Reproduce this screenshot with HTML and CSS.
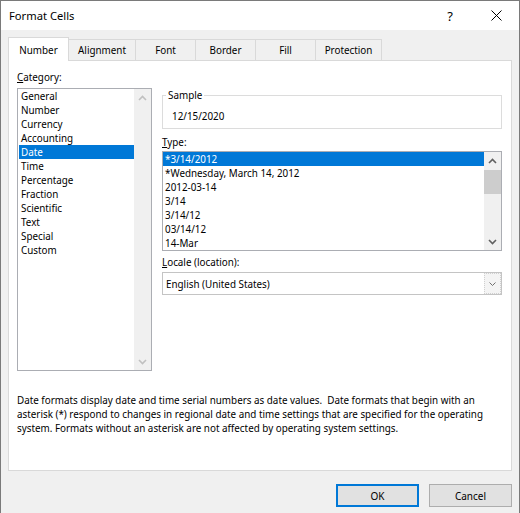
FILE: index.html
```
<!DOCTYPE html>
<html>
	<head>
		<meta charset="utf-8">
		<title>Format Cells</title>
		<link rel="stylesheet" href="styles.css">
	</head>
	<body>
		<div class="window">
			<div class="titlebar">
				<span class="title">Format Cells</span>
				<span class="caption-btn help">?</span>
				<span class="caption-btn close">
					<svg width="11" height="11" viewBox="0 0 11 11"><path d="M0.5 0.5 L10.5 10.5 M10.5 0.5 L0.5 10.5" stroke="#000" stroke-width="1" fill="none"/></svg>
				</span>
			</div>

			<div class="client">
				<div class="tabs">
					<div class="tab active tab-number">Number</div>
					<div class="tab tab-alignment">Alignment</div>
					<div class="tab tab-font">Font</div>
					<div class="tab tab-border">Border</div>
					<div class="tab tab-fill">Fill</div>
					<div class="tab tab-protection">Protection</div>
				</div>

				<div class="panel">
					<div class="label category-label"><u>C</u>ategory:</div>

					<div class="columns">
						<div class="listbox category">
							<div class="items">
								<div class="item">General</div>
								<div class="item">Number</div>
								<div class="item">Currency</div>
								<div class="item">Accounting</div>
								<div class="item selected">Date</div>
								<div class="item">Time</div>
								<div class="item">Percentage</div>
								<div class="item">Fraction</div>
								<div class="item">Scientific</div>
								<div class="item">Text</div>
								<div class="item">Special</div>
								<div class="item">Custom</div>
							</div>
							<div class="scrollbar disabled">
								<div class="arrow"><svg width="9" height="6" viewBox="0 0 9 6"><path d="M1 5 L4.5 1.5 L8 5" /></svg></div>
								<div class="track"></div>
								<div class="arrow"><svg width="9" height="6" viewBox="0 0 9 6"><path d="M1 1 L4.5 4.5 L8 1" /></svg></div>
							</div>
						</div>

						<div class="right">
							<fieldset class="sample">
								<legend>Sample</legend>
								<div class="sample-value">12/15/2020</div>
							</fieldset>

							<div class="label type-label"><u>T</u>ype:</div>
							<div class="listbox type">
								<div class="items">
									<div class="item selected">*3/14/2012</div>
									<div class="item">*Wednesday, March 14, 2012</div>
									<div class="item">2012-03-14</div>
									<div class="item">3/14</div>
									<div class="item">3/14/12</div>
									<div class="item">03/14/12</div>
									<div class="item">14-Mar</div>
								</div>
								<div class="scrollbar">
									<div class="arrow"><svg width="9" height="6" viewBox="0 0 9 6"><path d="M1 5 L4.5 1.5 L8 5" /></svg></div>
									<div class="track"><div class="thumb"></div></div>
									<div class="arrow"><svg width="9" height="6" viewBox="0 0 9 6"><path d="M1 1 L4.5 4.5 L8 1" /></svg></div>
								</div>
							</div>

							<div class="label locale-label"><u>L</u>ocale (location):</div>
							<div class="combo">
								<span class="combo-text">English (United States)</span>
								<span class="combo-btn"><svg width="9" height="6" viewBox="0 0 9 6"><path d="M1.5 1.5 L4.5 4.5 L7.5 1.5" /></svg></span>
							</div>
						</div>
					</div>

					<p class="description">
						Date formats display date and time serial numbers as date values.&nbsp; Date formats that begin with an<br>
						asterisk (*) respond to changes in regional date and time settings that are specified for the operating<br>
						system. Formats without an asterisk are not affected by operating system settings.
					</p>
				</div>

				<div class="buttons">
					<button class="default">OK</button>
					<button>Cancel</button>
				</div>
			</div>
		</div>
	</body>
</html>
```

FILE: styles.css
```
body {
	margin: 0;
	font-family: "Noto Sans", "Open Sans", sans-serif;
	font-size: 9.85px;
	color: #000;
	background: #f0f0f0;
}

.window {
	width: 520px;
	height: 513px;
	box-sizing: border-box;
	border: 1px solid #7a7a7a;
	border-bottom: none;
	display: flex;
	flex-direction: column;
	background: #f0f0f0;
}

.titlebar {
	height: 29px;
	background: #fff;
	display: flex;
	align-items: center;
}

.title {
	padding-left: 8px;
	font-size: 11.2px;
	flex: 1;
}

.caption-btn {
	width: 46px;
	height: 29px;
	display: flex;
	align-items: center;
	justify-content: center;
	font-size: 13px;
}

.client {
	flex: 1;
	padding: 7px 7px 0 7px;
}

/* tabs */

.tabs {
	height: 23px;
	display: flex;
	align-items: flex-end;
}

.tab {
	height: 21px;
	box-sizing: border-box;
	border: 1px solid #d9d9d9;
	border-bottom: none;
	margin-right: -1px;
	background: #f0f0f0;
	display: flex;
	align-items: center;
	justify-content: center;
}

.tab.active {
	height: 24px;
	margin-bottom: -1px;
	background: #fff;
	position: relative;
	z-index: 1;
}

.tab-number { width: 61px; }
.tab-alignment { width: 68px; }
.tab-font { width: 61px; }
.tab-border { width: 61px; }
.tab-fill { width: 61px; }
.tab-protection { width: 67px; }

.panel {
	height: 411px;
	box-sizing: border-box;
	border: 1px solid #d9d9d9;
	background: #fff;
	padding: 9px 8px 0 8px;
}

.label {
	line-height: 14px;
	height: 14px;
}

.category-label {
	margin-bottom: 4px;
}

.columns {
	display: grid;
	grid-template-columns: 135px 340px;
	column-gap: 10px;
	align-items: start;
}

/* list boxes */

.listbox {
	box-sizing: border-box;
	border: 1px solid #abadb3;
	display: flex;
	background: #fff;
}

.listbox.category {
	height: 283px;
}

.listbox.type {
	height: 100px;
}

.items {
	flex: 1;
}

.category .items {
	padding-left: 1px;
}

.item {
	height: 14px;
	line-height: 14px;
	padding-left: 2px;
	white-space: nowrap;
}

.item.selected {
	background: #0078d7;
	color: #fff;
}

.scrollbar {
	width: 17px;
	background: #f0f0f0;
	display: flex;
	flex-direction: column;
}

.scrollbar .arrow {
	height: 17px;
	display: flex;
	align-items: center;
	justify-content: center;
}

.scrollbar svg path {
	fill: none;
	stroke: #606060;
	stroke-width: 1.6;
}

.scrollbar.disabled svg path {
	stroke: #c0c0c0;
}

.scrollbar .track {
	flex: 1;
	padding-top: 1px;
}

.thumb {
	height: 24px;
	background: #cdcdcd;
}

/* right column */

.sample {
	margin: 0;
	padding: 7px 0 5px 3px;
	border: 1px solid #dcdcdc;
	min-width: 0;
}

.sample legend {
	padding: 0 2px;
	line-height: 14px;
}

.sample-value {
	line-height: 14px;
	padding-left: 6px;
}

.type-label {
	margin-top: 6px;
	margin-bottom: 2px;
}

.locale-label {
	margin-top: 4px;
	margin-bottom: 3px;
}

.combo {
	height: 23px;
	box-sizing: border-box;
	border: 1px solid #c4c4c4;
	display: flex;
	align-items: center;
}

.combo-text {
	flex: 1;
	padding-left: 3px;
}

.combo-btn {
	width: 17px;
	height: 21px;
	box-sizing: border-box;
	border: 1px dotted #d0d0d0;
	background: #f4f4f4;
	display: flex;
	align-items: center;
	justify-content: center;
}

.combo-btn svg path {
	fill: none;
	stroke: #707070;
	stroke-width: 1;
}

.description {
	margin: 22px 0 0 0;
	line-height: 14px;
	white-space: nowrap;
}

/* buttons */

.buttons {
	margin-top: 13px;
	display: flex;
	justify-content: flex-end;
	gap: 10px;
}

.buttons button {
	width: 83px;
	height: 23px;
	border: 1px solid #adadad;
	background: #e1e1e1;
	font-family: inherit;
	font-size: 10px;
	color: #000;
	padding: 0;
}

.buttons button.default {
	border: 1px solid #0078d7;
	box-shadow: inset 0 0 0 1px #0078d7;
}
```
